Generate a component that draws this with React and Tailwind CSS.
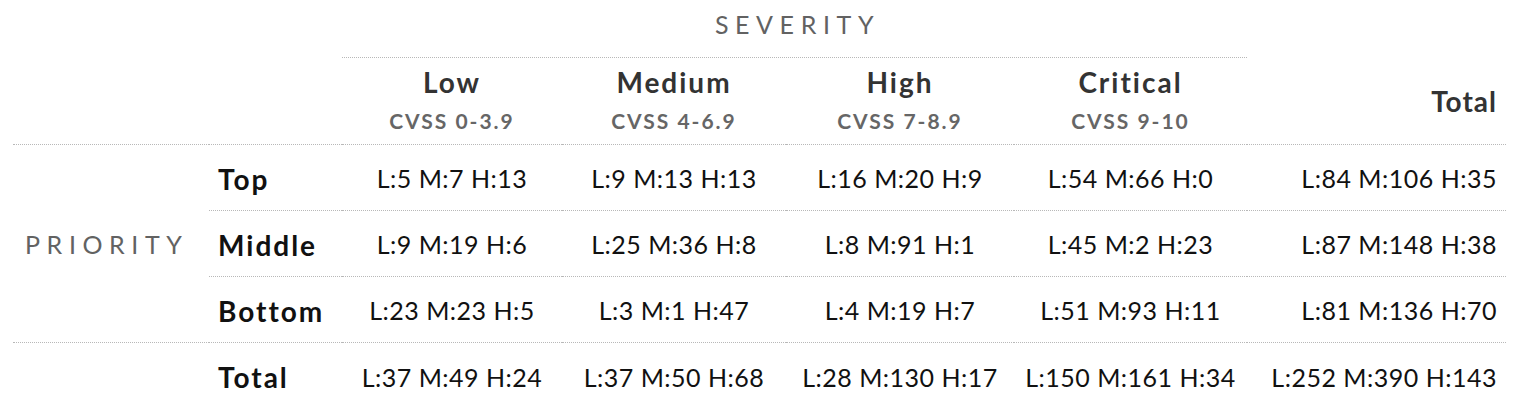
import React from "react";

const sev = [
  { name: "Low", range: "CVSS 0-3.9" },
  { name: "Medium", range: "CVSS 4-6.9" },
  { name: "High", range: "CVSS 7-8.9" },
  { name: "Critical", range: "CVSS 9-10" },
];

const rows = [
  { label: "Top", cells: ["L:5 M:7 H:13", "L:9 M:13 H:13", "L:16 M:20 H:9", "L:54 M:66 H:0"], total: "L:84 M:106 H:35" },
  { label: "Middle", cells: ["L:9 M:19 H:6", "L:25 M:36 H:8", "L:8 M:91 H:1", "L:45 M:2 H:23"], total: "L:87 M:148 H:38" },
  { label: "Bottom", cells: ["L:23 M:23 H:5", "L:3 M:1 H:47", "L:4 M:19 H:7", "L:51 M:93 H:11"], total: "L:81 M:136 H:70" },
];

const totals = { label: "Total", cells: ["L:37 M:49 H:24", "L:37 M:50 H:68", "L:28 M:130 H:17", "L:150 M:161 H:34"], total: "L:252 M:390 H:143" };

const line = "border-b border-dotted border-[#b8b8b8]";

function DataRow({ r, bordered }) {
  const b = bordered ? line : "";
  return (
    <>
      <div className={`${b} h-[66px] flex items-center pl-[9px] pt-[2px] text-[28px] font-bold tracking-[2px] text-[#111]`}>{r.label}</div>
      {r.cells.map((c, i) => (
        <div key={i} className={`${b} h-[66px] flex items-center justify-center pt-[2px] text-[25px] tracking-[0.5px] text-[#111]`}>{c}</div>
      ))}
      <div className={`${b} h-[66px] flex items-center justify-end pr-[9px] pt-[2px] text-[25px] tracking-[0.5px] text-[#111]`}>{r.total}</div>
    </>
  );
}

export default function App() {
  return (
    <div className="w-[1536px] h-[412px] bg-white pl-[13px]" style={{ fontFamily: "Lato, 'Noto Sans', sans-serif" }}>
      <div className="grid grid-cols-[196px_133px_220px_224px_228px_233px_259px] leading-none">
        {/* Row 1 */}
        <div className="h-[58px]" />
        <div className="h-[58px]" />
        <div className={`col-span-4 h-[58px] ${line} flex items-start justify-center pt-[12px] pl-[6px] text-[25px] tracking-[6.6px] text-[#626262]`}>SEVERITY</div>
        <div className="h-[58px]" />

        {/* Row 2 */}
        <div className={`h-[87px] ${line}`} />
        <div className={`h-[87px] ${line}`} />
        {sev.map((s) => (
          <div key={s.name} className={`h-[87px] ${line} flex flex-col items-center pt-[10px]`}>
            <div className="text-[28px] font-bold tracking-[2px] text-[#333]">{s.name}</div>
            <div className="mt-[14px] text-[21px] font-bold tracking-[2px] text-[#666]">{s.range}</div>
          </div>
        ))}
        <div className={`h-[87px] ${line} flex items-center justify-end pr-[9px] text-[28px] font-bold tracking-[1px] text-[#333]`}>Total</div>

        {/* Rows 3-5 */}
        <div className={`row-span-3 ${line} flex items-center pl-[12px] pt-[2px] text-[25px] tracking-[6.6px] text-[#626262]`}>PRIORITY</div>
        <DataRow r={rows[0]} bordered />
        <DataRow r={rows[1]} bordered />
        <DataRow r={rows[2]} bordered />

        {/* Total row */}
        <div className="h-[66px]" />
        <DataRow r={totals} />
      </div>
    </div>
  );
}
